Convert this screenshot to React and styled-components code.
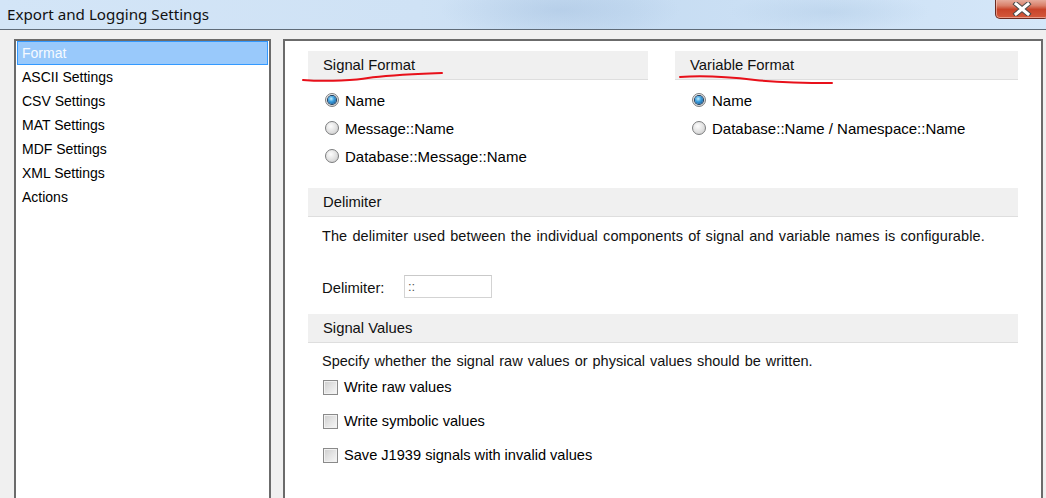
import React from "react";
import styled, { createGlobalStyle, css } from "styled-components";

const Global = createGlobalStyle`
  html, body { margin: 0; padding: 0; background: #f0f0f0; }
  body { font-family: "Liberation Sans", Arial, sans-serif; font-size: 14px; color: #000; }
  * { box-sizing: border-box; }
`;

const Window = styled.div`
  width: 1046px;
  height: 498px;
  display: flex;
  flex-direction: column;
  overflow: hidden;
  background: #f0f0f0;
`;

const TitleBar = styled.div`
  position: relative;
  height: 30px;
  flex: none;
  display: flex;
  align-items: center;
  padding-left: 7px;
  border-bottom: 1px solid #5f6b78;
  background:
    radial-gradient(ellipse 120px 30px at 560px 10px, rgba(150,180,215,0.35), transparent),
    radial-gradient(ellipse 100px 20px at 830px 12px, rgba(160,190,220,0.3), transparent),
    linear-gradient(90deg, #d3e5f7 0%, #cfe2f5 40%, #c6dcf2 60%, #d5e7f9 100%);
`;

const Title = styled.span`
  font-family: "Noto Sans", "Open Sans", sans-serif;
  font-size: 15.2px;
  color: #111;
  margin-top: -2px;
`;

const CloseButton = styled.div`
  position: absolute;
  top: -1px;
  left: 995px;
  width: 54px;
  height: 20px;
  border: 1px solid #6a2b22;
  border-top: none;
  border-radius: 0 0 5px 5px;
  background: linear-gradient(180deg, #e8b3a5 0%, #d9806a 35%, #c8442a 55%, #d4593c 100%);
  box-shadow: inset 0 0 0 1px rgba(255,220,210,0.5);
  display: flex;
  align-items: center;
  justify-content: center;
`;

const Body = styled.div`
  flex: 1;
  display: flex;
  gap: 12px;
  padding: 9px 3px 0 14px;
  min-height: 0;
`;

const ListPanel = styled.div`
  width: 257px;
  flex: none;
  border: 2px solid #6b6b6b;
  border-bottom: none;
  background: #fff;
  padding: 0 1px;
  display: flex;
  flex-direction: column;
`;

const ListItem = styled.div`
  height: 24px;
  display: flex;
  align-items: center;
  padding-left: 4px;
  font-size: 14px;
  color: #000;
  border: 1px solid transparent;
  ${(p) =>
    p.$selected &&
    css`
      background: #99c9fb;
      border-color: #3399ff;
      color: #f6faff;
    `}
`;

const ContentPanel = styled.div`
  flex: 1;
  border: 2px solid #6b6b6b;
  border-bottom: none;
  background: #fff;
  padding: 10px 23px 0 23px;
  display: flex;
  flex-direction: column;
`;

const FormatGrid = styled.div`
  display: grid;
  grid-template-columns: 340px 343px;
  gap: 27px;
`;

const SectionHeader = styled.div`
  position: relative;
  height: 29px;
  background: #f0f0f0;
  border-bottom: 1px solid #dedede;
  display: flex;
  align-items: center;
  padding-left: 15px;
  font-size: 14.8px;
  color: #111;
  margin-top: ${(p) => p.$mt || 0}px;
`;

const Annotation = styled.svg`
  position: absolute;
  left: 0;
  top: 0;
  overflow: visible;
  pointer-events: none;
`;

const RadioList = styled.div`
  display: flex;
  flex-direction: column;
  padding: 6px 0 0 17px;
`;

const OptionRow = styled.div`
  height: ${(p) => p.$h || 28}px;
  display: flex;
  align-items: center;
  gap: ${(p) => p.$gap || 6}px;
  font-size: ${(p) => p.$fs || 15}px;
  color: #000;
`;

const RadioCircle = styled.span`
  width: 14px;
  height: 14px;
  border-radius: 50%;
  border: 1px solid #7c7d7e;
  background: radial-gradient(circle at 40% 35%, #fdfdfd 0%, #e0e0e0 55%, #c4c4c4 100%);
  display: flex;
  align-items: center;
  justify-content: center;
  flex: none;
  &::after {
    content: "";
    display: ${(p) => (p.$checked ? "block" : "none")};
    width: 8px;
    height: 8px;
    border-radius: 50%;
    background: radial-gradient(circle at 40% 35%, #c4f0ff 0%, #3b9fdf 40%, #0f4a84 100%);
    box-shadow: 0 0 0 1px #18385a;
  }
`;

const CheckBox = styled.span`
  width: 15px;
  height: 15px;
  flex: none;
  border: 1px solid #8a8a8a;
  background: linear-gradient(135deg, #cdcdcd 0%, #e6e6e6 55%, #f7f7f7 100%);
  box-shadow: inset 0 0 0 1px #f1f1f1;
`;

const Paragraph = styled.div`
  padding-left: 14px;
  font-size: 14.5px;
  line-height: 17px;
  color: #111;
  margin-top: ${(p) => p.$mt || 0}px;
  letter-spacing: ${(p) => p.$ls ?? 0.1}px;
  word-spacing: 1px;
`;

const FieldRow = styled.div`
  display: flex;
  align-items: center;
  padding-left: 14px;
  margin-top: 30px;
  height: 23px;
`;

const FieldLabel = styled.span`
  width: 82px;
  font-size: 14.8px;
  padding-top: 3px;
  color: #111;
`;

const TextInput = styled.div`
  width: 88px;
  height: 23px;
  border: 1px solid #d3d3d3;
  border-top-color: #c9c9c9;
  background: #fff;
  padding: 3px 0 0 3px;
  font-size: 13px;
  color: #555;
`;

const CheckList = styled.div`
  display: flex;
  flex-direction: column;
  padding-left: 15px;
`;

function Radio({ checked, label }) {
  return (
    <OptionRow>
      <RadioCircle $checked={checked} />
      <span>{label}</span>
    </OptionRow>
  );
}

function Check({ label }) {
  return (
    <OptionRow $h={34} $fs={14.6} $gap={6}>
      <CheckBox />
      <span>{label}</span>
    </OptionRow>
  );
}

const items = ["Format", "ASCII Settings", "CSV Settings", "MAT Settings", "MDF Settings", "XML Settings", "Actions"];

export default function App() {
  return (
    <>
      <Global />
      <Window>
        <TitleBar>
          <Title>Export and Logging Settings</Title>
          <CloseButton>
            <svg width="20" height="14" viewBox="0 0 20 14">
              <path d="M4 2 L16 12 M16 2 L4 12" stroke="#4a4a4a" strokeWidth="5" strokeLinecap="square" />
              <path d="M4 2 L16 12 M16 2 L4 12" stroke="#ffffff" strokeWidth="3" strokeLinecap="square" />
            </svg>
          </CloseButton>
        </TitleBar>
        <Body>
          <ListPanel>
            {items.map((it, i) => (
              <ListItem key={it} $selected={i === 0}>
                {it}
              </ListItem>
            ))}
          </ListPanel>
          <ContentPanel>
            <FormatGrid>
              <div>
                <SectionHeader>
                  Signal Format
                  <Annotation width="1" height="1">
                    <path d="M-5 29 C 20 31, 50 29, 60 27 C 80 24, 110 23, 134 22" fill="none" stroke="#e8101a" strokeWidth="2" strokeLinecap="round" />
                  </Annotation>
                </SectionHeader>
                <RadioList>
                  <Radio checked label="Name" />
                  <Radio label="Message::Name" />
                  <Radio label="Database::Message::Name" />
                </RadioList>
              </div>
              <div>
                <SectionHeader>
                  Variable Format
                  <Annotation width="1" height="1">
                    <path d="M5 26 C 30 24, 55 26, 80 29 C 100 31, 130 32, 157 32" fill="none" stroke="#e8101a" strokeWidth="2" strokeLinecap="round" />
                  </Annotation>
                </SectionHeader>
                <RadioList>
                  <Radio checked label="Name" />
                  <Radio label="Database::Name / Namespace::Name" />
                </RadioList>
              </div>
            </FormatGrid>
            <SectionHeader $mt={18}>Delimiter</SectionHeader>
            <Paragraph $mt={11}>
              The delimiter used between the individual components of signal and variable names is configurable.
            </Paragraph>
            <FieldRow>
              <FieldLabel>Delimiter:</FieldLabel>
              <TextInput>::</TextInput>
            </FieldRow>
            <SectionHeader $mt={16}>Signal Values</SectionHeader>
            <Paragraph $mt={10} $ls={0}>
              Specify whether the signal raw values or physical values should be written.
            </Paragraph>
            <CheckList>
              <Check label="Write raw values" />
              <Check label="Write symbolic values" />
              <Check label="Save J1939 signals with invalid values" />
            </CheckList>
          </ContentPanel>
        </Body>
      </Window>
    </>
  );
}
